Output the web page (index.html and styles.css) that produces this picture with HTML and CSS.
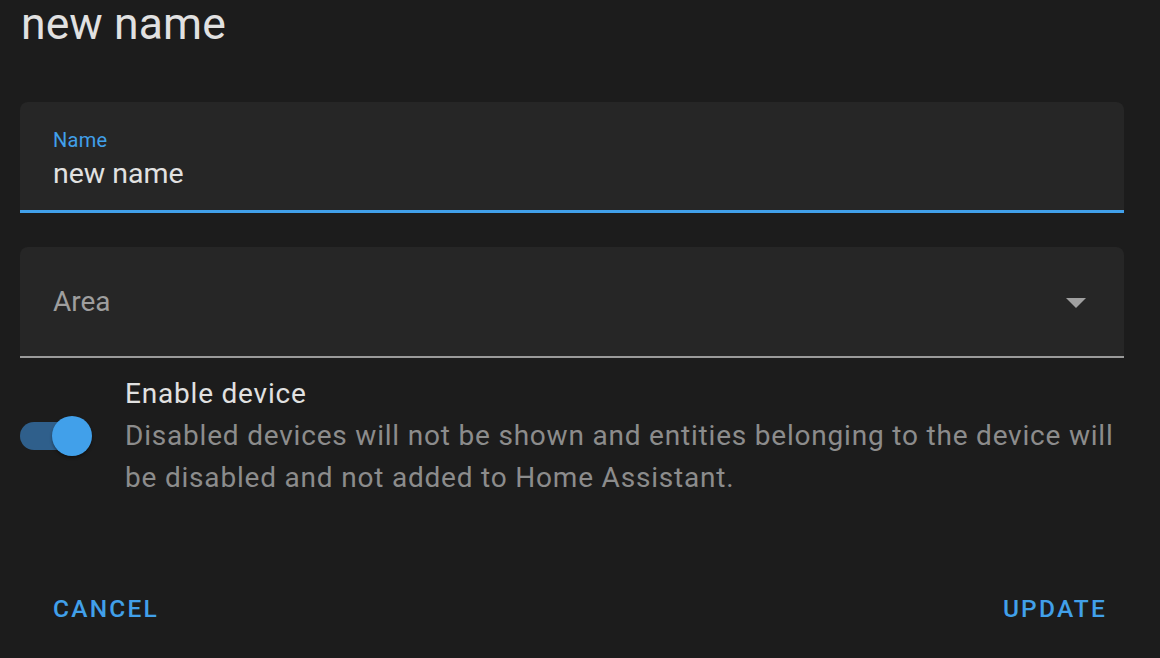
FILE: index.html
```html
<!DOCTYPE html>
<html lang="en">
<head>
<meta charset="utf-8">
<title>Device settings</title>
<link rel="stylesheet" href="styles.css">
</head>
<body>
<div class="dialog">
  <h2 class="title">new name</h2>
  <div class="field field-focused">
    <span class="field-label">Name</span>
    <span class="field-value">new name</span>
  </div>
  <div class="field field-select">
    <span class="select-label">Area</span>
    <svg class="select-arrow" viewBox="0 0 20 10" width="20" height="10"><polygon points="0,0 20,0 10,10" fill="currentColor"/></svg>
  </div>
  <div class="toggle-row">
    <div class="switch">
      <span class="switch-track"></span>
      <span class="switch-thumb"></span>
    </div>
    <div class="toggle-text">
      <div class="toggle-title">Enable device</div>
      <div class="toggle-desc">Disabled devices will not be shown and entities belonging to the device will be disabled and not added to Home Assistant.</div>
    </div>
  </div>
  <div class="actions">
    <button class="btn">CANCEL</button>
    <button class="btn">UPDATE</button>
  </div>
</div>
</body>
</html>
```
FILE: styles.css
```css
html, body {
  margin: 0;
  padding: 0;
  background: #1c1c1c;
  font-family: Roboto, "Noto Sans", sans-serif;
  width: 1160px;
  height: 658px;
  overflow: hidden;
}
.dialog {
  padding: 0 36px 0 20px;
}
.title {
  margin: 0 0 0 1px;
  font-size: 44.5px;
  line-height: 48px;
  font-weight: 400;
  color: #e1e1e1;
  letter-spacing: 0.1px;
}
.field {
  margin-top: 54px;
  background: #262626;
  border-radius: 8px 8px 0 0;
  box-sizing: border-box;
  height: 111px;
  padding-left: 33px;
}
.field-focused {
  border-bottom: 3px solid #41a0ea;
  display: flex;
  flex-direction: column;
  padding-top: 26px;
}
.field-label {
  font-size: 20px;
  line-height: 24px;
  color: #41a0ea;
  letter-spacing: 0.3px;
}
.field-value {
  margin-top: 4px;
  font-size: 28.5px;
  line-height: 36px;
  color: #e1e1e1;
}
.field-select {
  margin-top: 34px;
  border-bottom: 2px solid #9a9a9a;
  display: flex;
  align-items: center;
  justify-content: space-between;
  padding-right: 38px;
}
.select-label {
  font-size: 28px;
  color: #9e9e9e;
}
.select-arrow {
  color: #a0a0a0;
  margin-top: 2px;
}
.toggle-row {
  display: flex;
  align-items: center;
  margin-top: 15px;
}
.switch {
  position: relative;
  width: 72px;
  height: 40px;
  flex: none;
  margin-right: 33px;
}
.switch-track {
  position: absolute;
  left: 0;
  top: 6px;
  width: 68px;
  height: 28px;
  border-radius: 14px;
  background: #2f5f8b;
}
.switch-thumb {
  position: absolute;
  left: 32px;
  top: 0;
  width: 40px;
  height: 40px;
  border-radius: 50%;
  background: #41a0ea;
  box-shadow: 0 2px 3px rgba(0,0,0,0.35);
}
.toggle-text {
  flex: 1;
}
.toggle-title {
  font-size: 28px;
  line-height: 42px;
  color: #e1e1e1;
  letter-spacing: 0.8px;
}
.toggle-desc {
  font-size: 28px;
  line-height: 42px;
  color: #8c8c8c;
  letter-spacing: 0.8px;
}
.actions {
  display: flex;
  justify-content: space-between;
  margin-top: 95px;
  padding: 0 17px 0 33px;
}
.btn {
  background: none;
  border: none;
  padding: 0;
  font-family: Roboto, "Noto Sans", sans-serif;
  font-size: 24.5px;
  font-weight: 500;
  letter-spacing: 2.2px;
  color: #41a0ea;
  line-height: 30px;
}
```
